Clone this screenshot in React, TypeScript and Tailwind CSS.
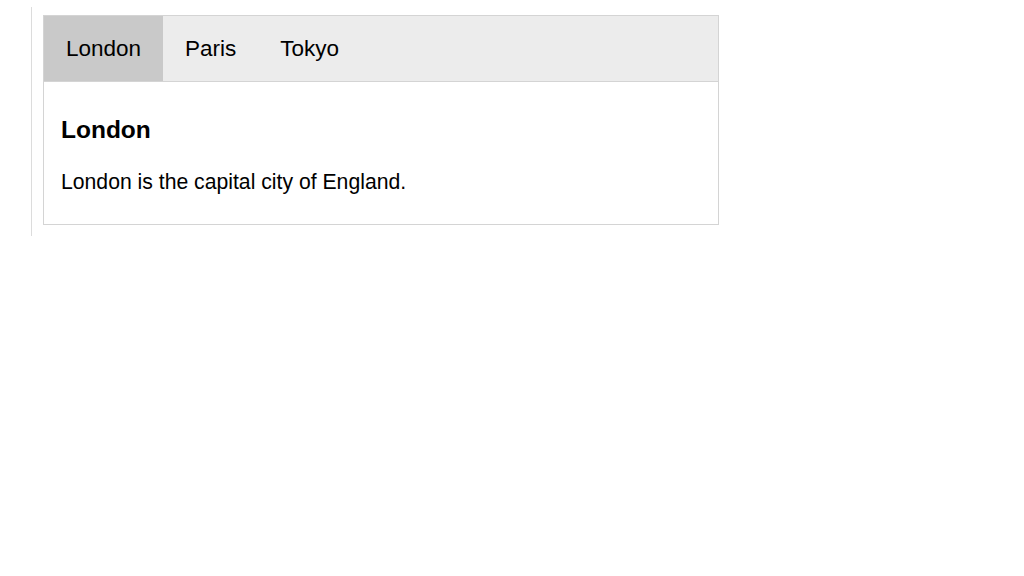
import { useState } from "react";

const cities = [
  { name: "London", text: "London is the capital city of England." },
  { name: "Paris", text: "Paris is the capital of France." },
  { name: "Tokyo", text: "Tokyo is the capital of Japan." },
];

export default function App() {
  const [active, setActive] = useState("London");
  const city = cities.find((c) => c.name === active) ?? cities[0];

  return (
    <div className="min-h-screen bg-white font-['Liberation_Sans',Arial,sans-serif] text-black">
      <div className="ml-[31px] mt-[7px] w-[687px] border-l border-[#dcdcdc] pb-[11px] pl-[11px] pt-[8px]">
        <div className="w-[676px]">
          <div className="flex border border-[#d4d4d4] bg-[#ececec]">
            {cities.map((c) => (
              <button
                key={c.name}
                type="button"
                onClick={() => setActive(c.name)}
                className={`px-[22px] py-[20px] text-[22.5px] leading-[25px] ${
                  active === c.name ? "bg-[#c9c9c9]" : "hover:bg-[#dddddd]"
                }`}
              >
                {c.name}
              </button>
            ))}
          </div>
          <div className="border border-t-0 border-[#d4d4d4] px-[17px] pb-[30px] pt-[34px]">
            <h3 className="mb-[26px] text-[24.5px] font-bold leading-[28px]">{city.name}</h3>
            <p className="text-[21.2px] leading-[24px]">{city.text}</p>
          </div>
        </div>
      </div>
    </div>
  );
}
